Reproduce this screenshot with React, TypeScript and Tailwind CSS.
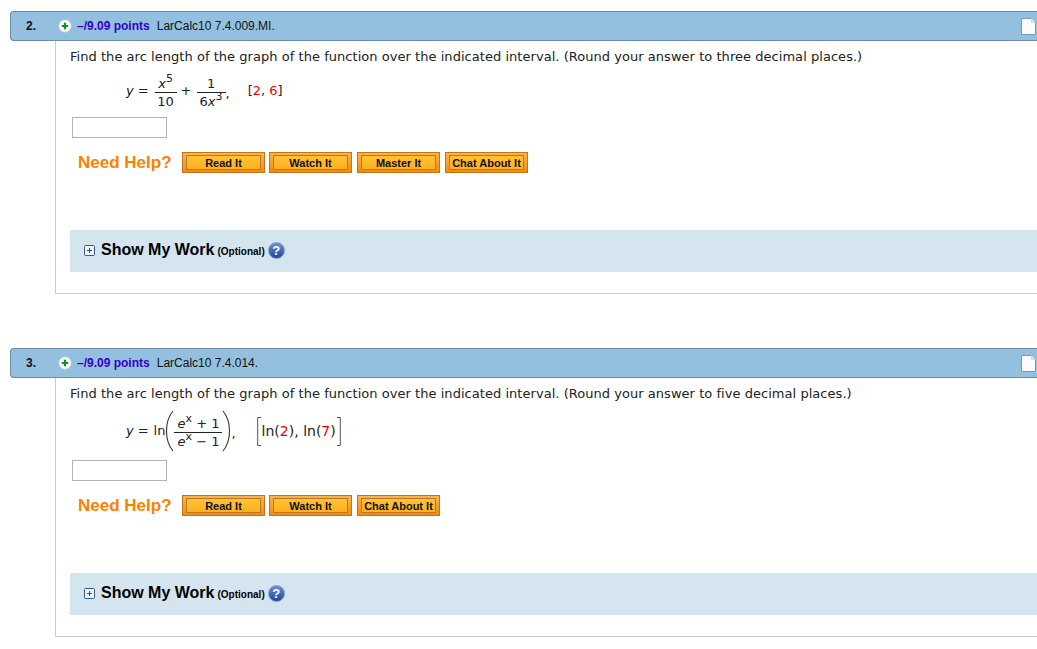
import type { ReactNode } from "react";

const GreenPlus = () => (
  <svg width="14" height="14" viewBox="0 0 14 14" className="shrink-0">
    <circle cx="7" cy="7" r="6.4" fill="#f6f7f7" stroke="#a9bdcb" strokeWidth="0.7" />
    <path d="M7 3.800v6.400M3.800 7h6.400" stroke="#16901f" strokeWidth="2.200" />
  </svg>
);

const PageIcon = () => (
  <svg width="15" height="17" viewBox="0 0 15 17">
    <path d="M.5.5h10l4 4v12H.5z" fill="#fbfbfb" stroke="#7a9ab4" />
    <path d="M10.500.5v4h4z" fill="#e2e5e8" stroke="#c3ccd3" strokeWidth="0.6" />
  </svg>
);

const ExpandIcon = () => (
  <svg width="11" height="11" viewBox="0 0 11 11" className="shrink-0">
    <rect x=".5" y=".5" width="10" height="10" rx="1" fill="#f1f5f9" stroke="#2a5c9a" />
    <path d="M3 5.500h5M5.500 3v5" stroke="#1f4f8a" />
  </svg>
);

const HelpIcon = () => (
  <div className="ml-[3px] flex h-[17px] w-[17px] items-center justify-center rounded-full border border-[#7f9ccb] bg-linear-to-b from-[#6d8fd0] to-[#21479a] text-[13px] font-bold leading-none text-white">
    ?
  </div>
);

const HelpButton = ({ label }: { label: string }) => (
  <div className="mr-[5px] h-[21px] w-[83px] border border-[#c2741a] bg-linear-to-b from-[#ffb347] to-[#f58b00] px-[3px] py-[2px] first:mr-[4px]">
    <div className="flex h-[15px] items-center justify-center border border-[#b8772e] bg-linear-to-b from-[#ffc233] to-[#ffb01f] pt-[1px] text-[11px] font-bold leading-none text-[#111]">
      {label}
    </div>
  </div>
);

const Frac = ({ top, bottom, className }: { top: ReactNode; bottom: ReactNode; className: string }) => (
  <div className={`flex flex-col items-center ${className}`}>
    <div className="flex h-[17px] items-end leading-none">{top}</div>
    <div className="my-[2px] h-px w-full bg-[#222]" />
    <div className="flex h-[15px] items-start leading-none">{bottom}</div>
  </div>
);

const Question = ({
  num,
  code,
  places,
  math,
  buttons,
  mathClass,
}: {
  num: string;
  code: string;
  places: string;
  math: ReactNode;
  buttons: string[];
  mathClass: string;
}) => (
  <section>
    <header className="flex h-[30px] items-center rounded-l-[4px] border border-r-0 border-[#6f8ba3] bg-[#94c0e0] pl-[15px] pr-[1px] text-[12px] text-[#111]">
      <span className="w-[32px] font-bold">{num}</span>
      <GreenPlus />
      <span className="ml-[5px] font-bold text-[#3300cc]">–/9.09 points</span>
      <span className="ml-[7px]">{code}</span>
      <div className="ml-auto flex">
        <PageIcon />
      </div>
    </header>
    <div className="ml-[45px] border-b border-l border-[#cccccc] pb-[21px] pl-[14px]">
      <p className="pt-[8px] font-['DejaVu_Sans',sans-serif] text-[13px] leading-[16px] tracking-[0.04px] text-[#222]">
        Find the arc length of the graph of the function over the indicated interval. (Round your answer to {places} decimal places.)
      </p>
      <div className={`flex items-center pl-[56px] font-['DejaVu_Sans',sans-serif] text-[13px] text-[#222] ${mathClass}`}>{math}</div>
      <div className="ml-[2px] h-[21px] w-[95px] border border-[#b3b3b3] bg-white" />
      <div className="mt-[14px] flex h-[21px] items-center">
        <span className="ml-[8px] mr-[10px] w-[94px] whitespace-nowrap text-[17px] font-bold text-[#ff7f00]">Need Help?</span>
        <div className="flex">
          {buttons.map((b) => (
            <HelpButton key={b} label={b} />
          ))}
        </div>
      </div>
      <div className="mt-[57px] flex h-[42px] items-center bg-[#d5e5f0] pb-[2px] pl-[14px] text-black">
        <ExpandIcon />
        <span className="ml-[6px] text-[16px] font-bold">Show My Work</span>
        <span className="ml-[3px] mt-[3px] text-[10px] font-bold">(Optional)</span>
        <HelpIcon />
      </div>
    </div>
  </section>
);

const MathOne = () => (
  <>
    <i>y</i>
    <span className="ml-[4px]">=</span>
    <Frac
      className="ml-[6px] w-[22px]"
      top={
        <span>
          <i>x</i>
          <sup className="text-[11px]">5</sup>
        </span>
      }
      bottom={<span>10</span>}
    />
    <span className="ml-[4px]">+</span>
    <Frac
      className="ml-[5px] w-[29px]"
      top={<span>1</span>}
      bottom={
        <span>
          6<i>x</i>
          <sup className="text-[11px]">3</sup>
        </span>
      }
    />
    <span className="mt-[5px]">,</span>
    <span className="ml-[18px]">
      [<span className="text-[#ee0000]">2</span>, <span className="text-[#ee0000]">6</span>]
    </span>
  </>
);

const BigParen = ({ flip }: { flip?: boolean }) => (
  <svg width="9" height="42" viewBox="0 0 9 42" className={flip ? "-scale-x-100" : ""}>
    <path d="M8 1C3 7 1.500 14 1.500 21S3 35 8 41" fill="none" stroke="#333" strokeWidth="1.100" />
  </svg>
);

const BigBracket = ({ flip }: { flip?: boolean }) => (
  <svg width="4" height="29" viewBox="0 0 4 29" className={flip ? "-scale-x-100" : ""}>
    <path d="M4 .5H.7v28H4" fill="none" stroke="#555" />
  </svg>
);

const MathTwo = () => (
  <>
    <i>y</i>
    <span className="ml-[4px]">=</span>
    <span className="ml-[5px]">ln</span>
    <BigParen />
    <Frac
      className="w-[48px]"
      top={
        <span>
          <i>e</i>
          <sup className="text-[11px]">x</sup> + 1
        </span>
      }
      bottom={
        <span>
          <i>e</i>
          <sup className="text-[11px]">x</sup> − 1
        </span>
      }
    />
    <BigParen flip />
    <span className="mt-[5px]">,</span>
    <span className="ml-[21px] flex items-center">
      <BigBracket />
      <span className="ml-[1px] text-[14px]">
        ln(<span className="text-[#ee0000]">2</span>), ln(<span className="text-[#ee0000]">7</span>)
      </span>
      <span className="ml-[1px] flex">
        <BigBracket flip />
      </span>
    </span>
  </>
);

export default function App() {
  return (
    <div className="min-h-[649px] w-[1037px] overflow-hidden bg-white pl-[10px] pt-[11px] font-['Liberation_Sans',sans-serif]">
      <Question
        num="2."
        code="LarCalc10 7.4.009.MI."
        places="three"
        math={<MathOne />}
        mathClass="h-[52px]"
        buttons={["Read It", "Watch It", "Master It", "Chat About It"]}
      />
      <div className="h-[54px]" />
      <Question
        num="3."
        code="LarCalc10 7.4.014."
        places="five"
        math={<MathTwo />}
        mathClass="h-[58px]"
        buttons={["Read It", "Watch It", "Chat About It"]}
      />
    </div>
  );
}
